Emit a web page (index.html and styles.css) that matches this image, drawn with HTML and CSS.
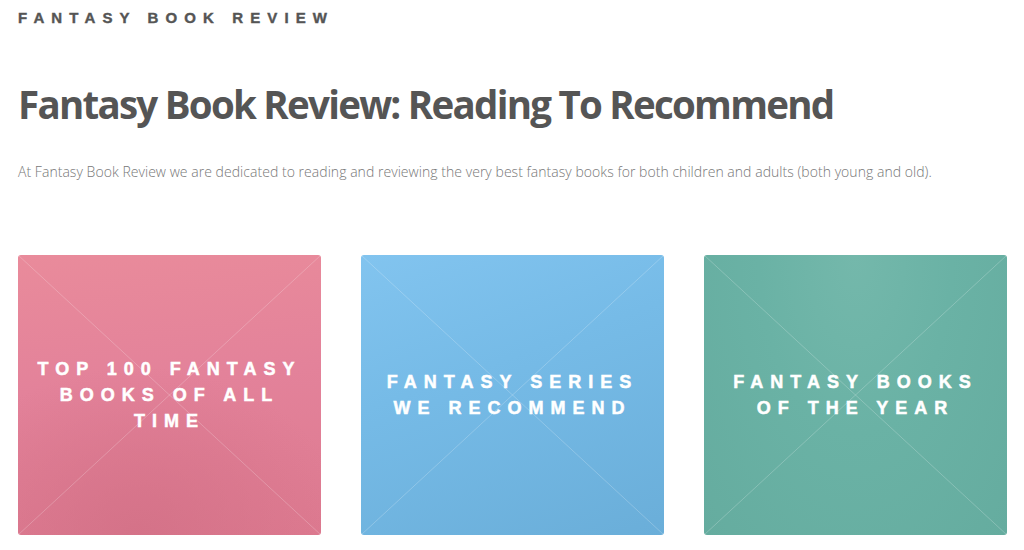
FILE: index.html
```html
<!DOCTYPE html>
<html>
<head>
<meta charset="utf-8">
<link rel="stylesheet" href="styles.css">
</head>
<body>
<div class="page">
  <div class="site-title">FANTASY BOOK REVIEW</div>
  <h1 class="headline">Fantasy Book Review: Reading To Recommend</h1>
  <p class="intro">At Fantasy Book Review we are dedicated to reading and reviewing the very best fantasy books for both children and adults (both young and old).</p>
  <div class="cards">
    <a class="card card-pink">
      <svg class="cross" viewBox="0 0 100 100" preserveAspectRatio="none"><line x1="0" y1="0" x2="100" y2="100"/><line x1="100" y1="0" x2="0" y2="100"/></svg>
      <span class="card-label">TOP 100 FANTASY BOOKS OF ALL TIME</span>
    </a>
    <a class="card card-blue">
      <svg class="cross" viewBox="0 0 100 100" preserveAspectRatio="none"><line x1="0" y1="0" x2="100" y2="100"/><line x1="100" y1="0" x2="0" y2="100"/></svg>
      <span class="card-label">FANTASY SERIES WE RECOMMEND</span>
    </a>
    <a class="card card-green">
      <svg class="cross" viewBox="0 0 100 100" preserveAspectRatio="none"><line x1="0" y1="0" x2="100" y2="100"/><line x1="100" y1="0" x2="0" y2="100"/></svg>
      <span class="card-label">FANTASY BOOKS OF THE YEAR</span>
    </a>
  </div>
</div>
</body>
</html>
```

FILE: styles.css
```css
html, body {
  margin: 0;
  padding: 0;
  background: #ffffff;
}
.page {
  padding: 9px 17px 0 18px;
}
.site-title {
  font-family: "Liberation Sans", Arial, sans-serif;
  font-weight: 700;
  font-size: 15px;
  letter-spacing: 7.1px;
  color: #555555;
  line-height: 18px;
  -webkit-text-stroke: 0.4px #555555;
}
.headline {
  font-family: "Open Sans", sans-serif;
  font-weight: 700;
  font-size: 38.5px;
  letter-spacing: -1.75px;
  color: #555555;
  margin: 52px 0 0 0;
  line-height: 50px;
}
.intro {
  font-family: "Open Sans", sans-serif;
  font-weight: 300;
  font-size: 14px;
  letter-spacing: 0.04px;
  color: #777777;
  margin: 32px 0 0 0;
  line-height: 22px;
}
.cards {
  display: grid;
  grid-template-columns: repeat(3, 303px);
  column-gap: 40px;
  margin-top: 72px;
}
.card {
  position: relative;
  height: 280px;
  border-radius: 3px;
  overflow: hidden;
  display: flex;
  align-items: center;
  justify-content: center;
  text-align: center;
  padding: 0 14px;
}
.card-pink {
  background:
    radial-gradient(ellipse 70% 60% at 40% 100%, rgba(210, 112, 134, 0.8) 0%, rgba(210, 112, 134, 0) 100%),
    linear-gradient(175deg, #e98b9b 0%, #e3829a 45%, #dd7a90 100%);
}
.card-blue {
  background: linear-gradient(160deg, #82c4ef 0%, #76bbe7 40%, #6aaed9 100%);
}
.card-green {
  background: radial-gradient(ellipse at 50% 0%, #74b8ab 0%, #6ab2a5 45%, #65ac9f 100%);
}
.cross {
  position: absolute;
  inset: 0;
  width: 100%;
  height: 100%;
}
.cross line {
  stroke: rgba(255, 255, 255, 0.22);
  stroke-width: 1;
  vector-effect: non-scaling-stroke;
}
.card-label {
  position: relative;
  font-family: "Liberation Sans", Arial, sans-serif;
  font-weight: 700;
  font-size: 18px;
  line-height: 26px;
  letter-spacing: 7px;
  color: #ffffff;
  -webkit-text-stroke: 0.5px #ffffff;
}
```
